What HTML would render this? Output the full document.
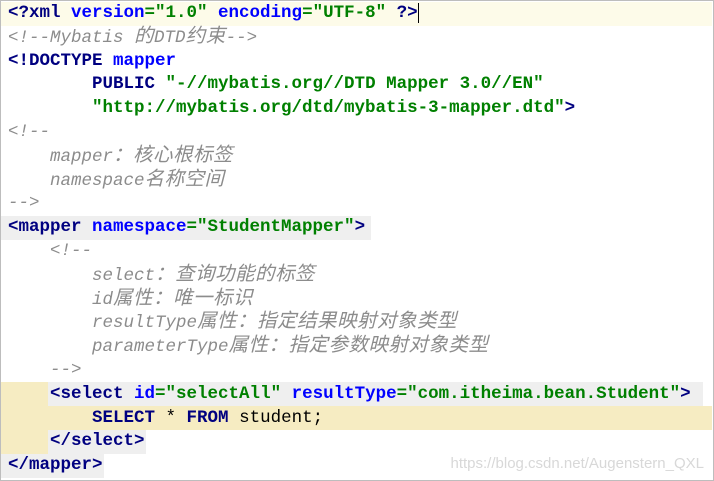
<!DOCTYPE html>
<html><head><meta charset="utf-8"><style>
body{margin:0;width:714px;height:481px;background:#fff;overflow:hidden;position:relative;font-family:"Liberation Mono","Noto Sans CJK SC",monospace;font-size:17.5px;}
.f{position:absolute;left:0;top:0;width:712px;height:479px;border:1px solid #bdbdbd;}
.l{position:absolute;left:8px;height:23.8px;line-height:23.8px;white-space:pre;}
.bg{position:absolute;}
.t{color:#000080;font-weight:bold}
.a{color:#0000ff;font-weight:bold}
.s{color:#008000;font-weight:bold}
.c{color:#8c8c8c;font-style:italic}
.c i{font-size:19.5px;letter-spacing:0.5px}
.k{color:#000080;font-weight:bold}
.wm{position:absolute;right:10px;top:455px;color:#d8d8d8;font-family:"Liberation Sans",sans-serif;font-size:15px;}
</style></head><body>
<div class="bg" style="left:1px;top:2px;width:711px;height:24px;background:#fdfbe9"></div>
<div class="bg" style="left:1px;top:216px;width:370px;height:24px;background:#efefef"></div>
<div class="bg" style="left:48px;top:382px;width:655px;height:24px;background:#efefef"></div>
<div class="bg" style="left:1px;top:406px;width:711px;height:24px;background:#f6ecc2"></div>
<div class="bg" style="left:1px;top:382px;width:47px;height:72px;background:#f6ecc2"></div>
<div class="bg" style="left:48px;top:430px;width:98px;height:24px;background:#efefef"></div>
<div class="bg" style="left:1px;top:454px;width:103px;height:24px;background:#efefef"></div>
<div class="l" style="top:2px"><span class="t">&lt;?xml </span><span class="a">version</span><span class="s">="1.0" </span><span class="a">encoding</span><span class="s">="UTF-8" </span><span class="t">?&gt;</span><span style="border-left:1px solid #000"> </span></div>
<div class="l c" style="top:25.8px">&lt;!--Mybatis <i>的</i>DTD<i>约束</i>--&gt;</div>
<div class="l" style="top:49.6px"><span class="t">&lt;!DOCTYPE </span><span class="a">mapper</span></div>
<div class="l" style="top:73.4px"><span class="t">        PUBLIC </span><span class="s">"-//mybatis.org//DTD Mapper 3.0//EN"</span></div>
<div class="l" style="top:97.2px"><span class="s">        "http://mybatis.org/dtd/mybatis-3-mapper.dtd"</span><span class="t">&gt;</span></div>
<div class="l c" style="top:121px">&lt;!--</div>
<div class="l c" style="top:144.8px">    mapper<i>：核心根标签</i></div>
<div class="l c" style="top:168.6px">    namespace<i>名称空间</i></div>
<div class="l c" style="top:192.4px">--&gt;</div>
<div class="l" style="top:216.2px"><span class="t">&lt;mapper </span><span class="a">namespace</span><span class="s">="StudentMapper"</span><span class="t">&gt;</span></div>
<div class="l c" style="top:240px">    &lt;!--</div>
<div class="l c" style="top:263.8px">        select<i>：查询功能的标签</i></div>
<div class="l c" style="top:287.6px">        id<i>属性：唯一标识</i></div>
<div class="l c" style="top:311.4px">        resultType<i>属性：指定结果映射对象类型</i></div>
<div class="l c" style="top:335.2px">        parameterType<i>属性：指定参数映射对象类型</i></div>
<div class="l c" style="top:359px">    --&gt;</div>
<div class="l" style="top:382.8px"><span class="t">    &lt;select </span><span class="a">id</span><span class="s">="selectAll" </span><span class="a">resultType</span><span class="s">="com.itheima.bean.Student"</span><span class="t">&gt;</span></div>
<div class="l" style="top:406.6px"><span class="k">        SELECT </span>* <span class="k">FROM </span>student;</div>
<div class="l" style="top:430.4px"><span class="t">    &lt;/select&gt;</span></div>
<div class="l" style="top:454.2px"><span class="t">&lt;/mapper&gt;</span></div>
<div class="wm">https://blog.csdn.net/Augenstern_QXL</div>
<div class="f"></div>
</body></html>
